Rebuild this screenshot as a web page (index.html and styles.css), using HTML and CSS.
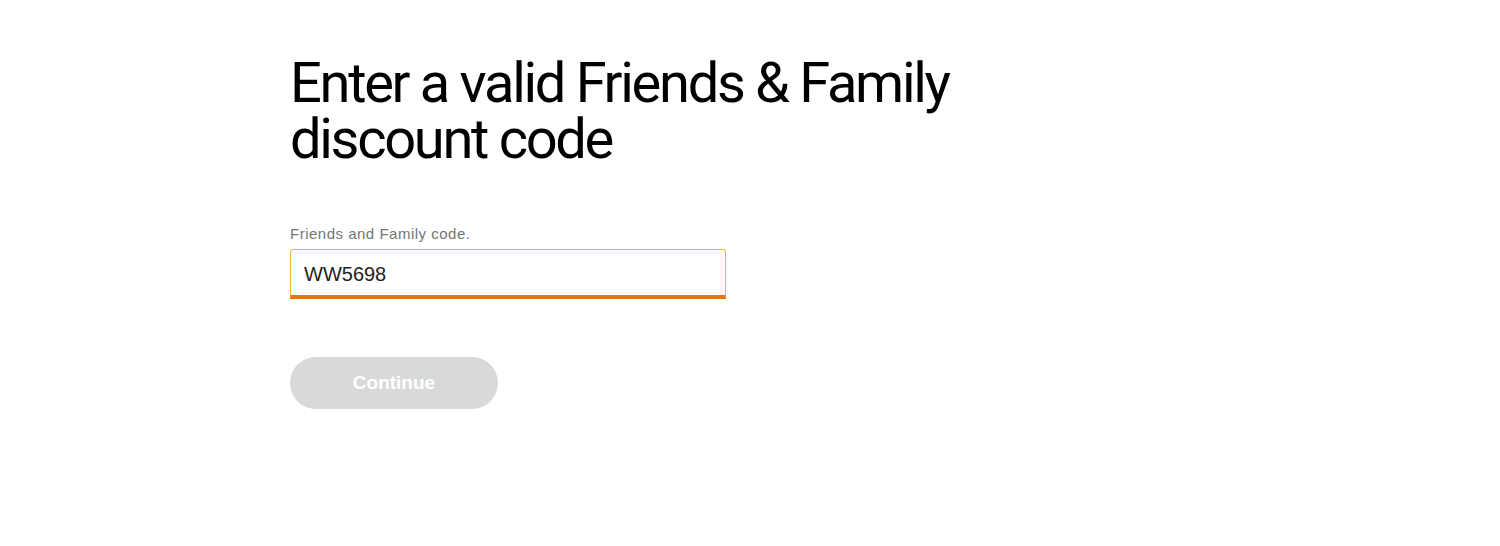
FILE: index.html
```html
<!DOCTYPE html>
<html>

<head lang="en">
    <meta charset="UTF-8">
    <title>Friends &amp; Family</title>
    <link rel="stylesheet" href="styles.css">
</head>

<body>

    <div class="page">
        <h1 class="page-title">Enter a valid Friends &amp; Family<br>discount code</h1>

        <form class="code-form" onsubmit="return false;">
            <label class="code-label" for="code">Friends and Family code.</label>
            <div class="code-field">
                <input type="text" id="code" class="code-input" value="WW5698">
            </div>
            <button type="submit" class="continue-btn" disabled>Continue</button>
        </form>
    </div>

</body>

</html>
```

FILE: styles.css
```css
html,
body,
h1,
form,
div,
label {
    padding: 0px;
    margin: 0px;
}

body {
    background: #ffffff;
    color: #000000;
    font-family: "Liberation Sans", Arial, sans-serif;
}

.page {
    padding: 55px 0px 0px 290px;
}

.page-title {
    font-family: Roboto, "Liberation Sans", Arial, sans-serif;
    font-size: 56px;
    line-height: 56px;
    font-weight: normal;
    letter-spacing: -2.3px;
}

.code-form {
    margin-top: 58px;
    width: 436px;
}

.code-label {
    display: block;
    font-size: 15px;
    line-height: 18px;
    letter-spacing: 0.5px;
    color: #747676;
}

.code-field {
    margin-top: 6px;
    height: 50px;
    box-sizing: border-box;
    border: #f7b141 solid 1px;
    border-bottom: #e8730c solid 4px;
    border-radius: 3px 3px 0px 0px;
}

.code-input {
    display: block;
    width: 100%;
    height: 45px;
    box-sizing: border-box;
    border: none;
    outline: none;
    padding: 4px 13px 0px 13px;
    font-family: "Liberation Sans", Arial, sans-serif;
    font-size: 20px;
    color: #222222;
    background: transparent;
}

.continue-btn {
    display: block;
    margin-top: 58px;
    width: 208px;
    height: 52px;
    border: none;
    border-radius: 26px;
    background: #d8dada;
    color: #ffffff;
    font-family: "Liberation Sans", Arial, sans-serif;
    font-size: 19px;
    font-weight: bold;
    cursor: default;
}
```
